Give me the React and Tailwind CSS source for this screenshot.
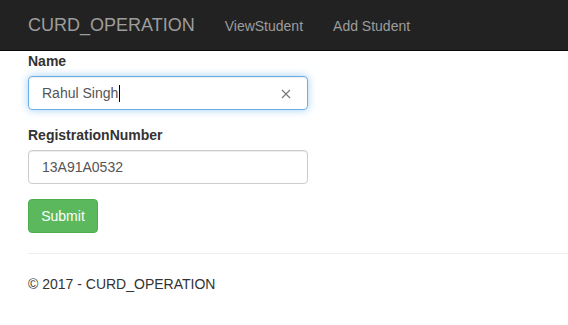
import React from "react";

export default function App() {
  const font = { fontFamily: '"Liberation Sans", Arial, sans-serif' };
  return (
    <div className="min-h-[325px] bg-white text-[14px] leading-[20px] text-[#333]" style={font}>
      <nav className="flex h-[51px] items-center border-b border-[#080808] bg-[#222] pl-[13px]">
        <span className="px-[15px] text-[18px] leading-[20px] text-[#9d9d9d]">CURD_OPERATION</span>
        <span className="px-[15px] pt-[2px] text-[14px] text-[#9d9d9d]">ViewStudent</span>
        <span className="px-[15px] pt-[2px] text-[14px] text-[#9d9d9d]">Add Student</span>
      </nav>
      <div className="pl-[28px]">
        <div className="mb-[15px]">
          <div className="mb-[5px] font-bold">Name</div>
          <div className="flex h-[34px] w-[280px] items-center rounded-[4px] border border-[#66afe9] pl-[13px] pr-[16px] text-[#555] shadow-[inset_0_1px_1px_rgba(0,0,0,0.075),0_0_8px_rgba(102,175,233,0.6)]">
            <span>Rahul Singh</span>
            <span className="ml-[1px] inline-block h-[17px] w-[1px] bg-black" />
            <span className="flex-1" />
            <svg width="10" height="10" viewBox="0 0 10 10" className="mt-[1px]">
              <path d="M1 1L9 9M9 1L1 9" stroke="#777" strokeWidth="1.1" />
            </svg>
          </div>
        </div>
        <div className="mb-[15px]">
          <div className="mb-[5px] font-bold">RegistrationNumber</div>
          <div className="flex h-[34px] w-[280px] items-center rounded-[4px] border border-[#ccc] pl-[13px] text-[#555] shadow-[inset_0_1px_1px_rgba(0,0,0,0.075)]">
            13A91A0532
          </div>
        </div>
        <button className="h-[34px] w-[70px] rounded-[4px] border border-[#4cae4c] bg-[#5cb85c] text-[14px] text-white">
          Submit
        </button>
        <div className="mt-[20px] mb-[20px] border-t border-[#eee]" />
        <p>© 2017 - CURD_OPERATION</p>
      </div>
    </div>
  );
}
